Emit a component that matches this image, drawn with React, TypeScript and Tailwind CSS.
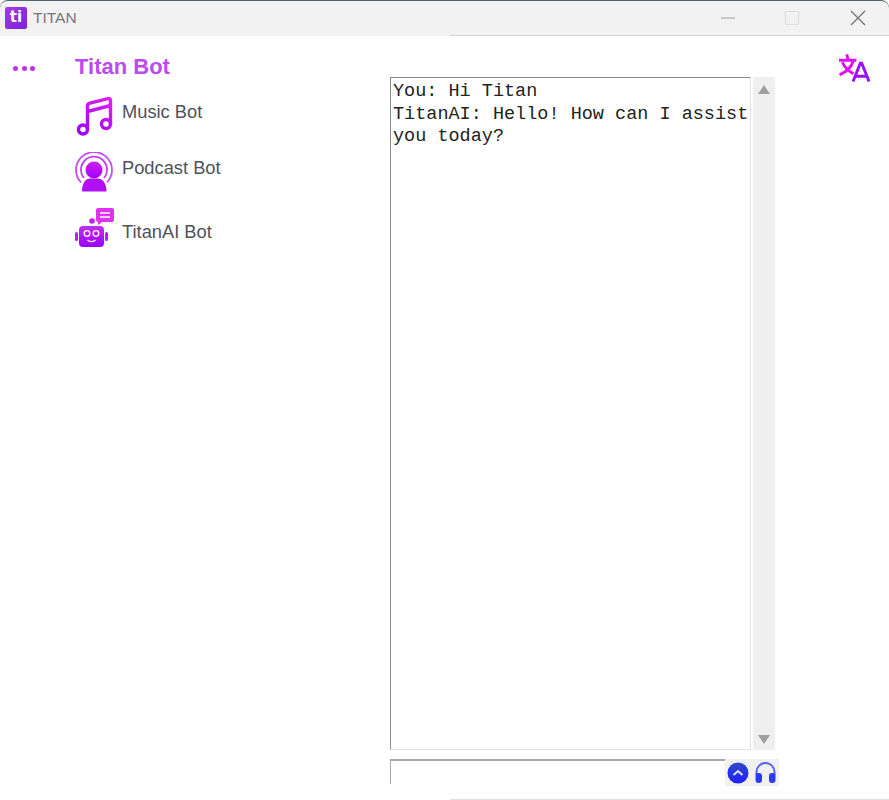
import React from "react";

const MusicIcon = () => (
  <svg width="38" height="42" viewBox="-1.500 0 38 42" fill="none" stroke="url(#gm)" strokeWidth="3.400" className="shrink-0">
    <defs>
      <linearGradient id="gm" gradientUnits="userSpaceOnUse" x1="32" y1="0" x2="5" y2="40">
        <stop offset="0" stopColor="#e020f0" />
        <stop offset="1" stopColor="#9a00ff" />
      </linearGradient>
    </defs>
    <path d="M11 33V10c0-1.500 .8-2.400 2.400-2.800l18-4.600c1.800-.3 2.600 .5 2.600 2V28" />
    <path d="M11 15.500l23-6" />
    <circle cx="6.500" cy="33.500" r="4.500" />
    <circle cx="29.500" cy="28" r="4.500" />
  </svg>
);

const PodcastIcon = () => (
  <svg width="38" height="40" viewBox="-0.500 0 38 40" className="shrink-0">
    <defs>
      <linearGradient id="gp" x1="0" y1="0" x2="0" y2="1">
        <stop offset="0" stopColor="#d020f0" />
        <stop offset="1" stopColor="#a000ff" />
      </linearGradient>
    </defs>
    <path d="M5.500 30.500A18 18 0 1 1 31.500 30.500" fill="none" stroke="#c450f2" strokeWidth="1.800" />
    <path d="M8.500 26A13 13 0 1 1 28.500 26" fill="none" stroke="#c040f0" strokeWidth="1.800" />
    <circle cx="18.500" cy="18" r="8.500" fill="url(#gp)" />
    <path d="M6.500 39.500c0-8.500 3.500-13 8.500-13h7c5 0 9 4.500 9 13z" fill="#b010f8" />
  </svg>
);

const RobotIcon = () => (
  <svg width="40" height="40" viewBox="0 0 40 40" className="shrink-0">
    <defs>
      <linearGradient id="gr" x1="0" y1="0" x2="0" y2="1">
        <stop offset="0" stopColor="#c030f0" />
        <stop offset="1" stopColor="#9a00ff" />
      </linearGradient>
    </defs>
    <path d="M23 0h14a2 2 0 0 1 2 2v10a2 2 0 0 1-2 2H27l-4 3v-3a2 2 0 0 1-2-2V2a2 2 0 0 1 2-2z" fill="#e030f0" />
    <path d="M25 5h10M25 9h10" stroke="#fff" strokeWidth="1.300" />
    <circle cx="17" cy="13" r="2.800" fill="#c020f0" />
    <rect x="4" y="18" width="25" height="21" rx="4" fill="url(#gr)" />
    <rect x="0" y="24" width="3" height="9" rx="1.500" fill="#b020f0" />
    <rect x="30" y="24" width="3" height="9" rx="1.500" fill="#b020f0" />
    <circle cx="12" cy="25.500" r="2.800" fill="none" stroke="#fff" strokeWidth="1.300" />
    <circle cx="21" cy="25.500" r="2.800" fill="none" stroke="#fff" strokeWidth="1.300" />
    <path d="M12.500 32c2.300 2 5.700 2 8 0" fill="none" stroke="#fff" strokeWidth="1.300" />
  </svg>
);

const TranslateIcon = () => (
  <svg width="31" height="30" viewBox="0 0 32 30" fill="none" strokeWidth="3" className="shrink-0">
    <path d="M0 7h18M8 1l1.500 6M15 7c-2 7-7 12-14.500 15M3.500 9c2 5 6 9 11.500 12" stroke="#e010f0" />
    <path d="M14.500 29L22 10h1.500L31 29M17 23.500h11.500" stroke="#9a10f8" />
  </svg>
);

const BotRow = ({ icon, label, className, labelClass }: { icon: React.ReactNode; label: string; className: string; labelClass: string }) => (
  <div className={`flex items-start ${className}`}>
    <div className="w-[47px] flex">{icon}</div>
    <span className={`text-[18.300px] leading-[22px] text-[#50505c] ${labelClass}`}>{label}</span>
  </div>
);

export default function App() {
  return (
    <div className="w-[889px] h-[800px] bg-white flex flex-col overflow-hidden [font-family:'Liberation_Sans',Arial,sans-serif]">
      <header className="relative h-[36px] shrink-0 flex items-center pb-[2px] bg-[#f2f2f2] border-t border-t-[#4f6470] rounded-t-[8px]">
        <div className="ml-[5px] w-[22px] h-[22px] rounded-[2px] bg-gradient-to-br from-[#a838e8] to-[#7a20d8] flex items-center justify-center text-white font-bold text-[15px] leading-none [font-family:'DejaVu_Sans',sans-serif]">
          ti
        </div>
        <span className="ml-[6px] text-[15.500px] text-[#777777]">TITAN</span>
        <div className="ml-auto flex items-center mr-[23px]">
          <svg width="14" height="2" className="mr-[50px]"><path d="M0 1h14" stroke="#999" strokeWidth="1" /></svg>
          <div className="w-[14px] h-[14px] border border-[#dcdcdc] mr-[51px]" />
          <svg width="16" height="16" viewBox="0 0 16 16"><path d="M1 1l14 14M15 1L1 15" stroke="#707070" strokeWidth="1.200" /></svg>
        </div>
        <div className="absolute left-[450px] right-0 bottom-0 h-px bg-[#d4d4d4]" />
      </header>

      <main className="relative flex flex-1 min-h-0">
        <aside className="w-[390px] shrink-0 flex">
          <div className="w-[75px] shrink-0 pt-[30px] pl-[13px] flex gap-[3.500px] items-start">
            <span className="w-[5px] h-[5px] rounded-full bg-[#c030ec]" />
            <span className="w-[5px] h-[5px] rounded-full bg-[#c030ec]" />
            <span className="w-[5px] h-[5px] rounded-full bg-[#c030ec]" />
          </div>
          <div className="flex flex-col">
            <h1 className="mt-[17px] text-[22px] leading-[28px] font-bold text-[#b84cf0]">Titan Bot</h1>
            <BotRow className="mt-[15px]" labelClass="pt-[5px]" icon={<MusicIcon />} label="Music Bot" />
            <BotRow className="mt-[14px]" labelClass="pt-[5px]" icon={<PodcastIcon />} label="Podcast Bot" />
            <BotRow className="mt-[16px]" labelClass="pt-[13px]" icon={<RobotIcon />} label="TitanAI Bot" />
          </div>
        </aside>

        <section className="w-[389px] shrink-0 flex flex-col pt-[41px]">
          <div className="flex h-[673px]">
            <div className="w-[361px] border-t border-l border-t-[#8a8a8a] border-l-[#8a8a8a] border-r border-b border-r-[#e2e2e2] border-b-[#e2e2e2] pl-[2px] pt-[3px] text-[18.500px] leading-[22.500px] text-[#222222] [font-family:'Liberation_Mono','Courier_New',monospace]">
              You: Hi Titan
              <br />
              TitanAI: Hello! How can I assist
              <br />
              you today?
            </div>
            <div className="ml-[2px] w-[22px] bg-[#efefef] flex flex-col items-center justify-between pt-[8px] pb-[6px]">
              <svg width="12" height="9"><path d="M6 0l6 9H0z" fill="#a0a0a0" /></svg>
              <svg width="12" height="9"><path d="M0 0h12L6 9z" fill="#a0a0a0" /></svg>
            </div>
          </div>
          <div className="mt-[9px] flex h-[27px]">
            <div className="w-[335px] h-[25px] border-t-2 border-l border-t-[#a8a8a8] border-l-[#a8a8a8]" />
            <div className="w-[54px] bg-[#f0f0f0] flex items-center justify-center gap-[5px]">
              <svg width="22" height="22" viewBox="0 0 22 22">
                <defs>
                  <linearGradient id="gb" x1="0" y1="0" x2="0" y2="1">
                    <stop offset="0" stopColor="#3048c8" />
                    <stop offset="1" stopColor="#2020ff" />
                  </linearGradient>
                </defs>
                <circle cx="11" cy="11" r="10.500" fill="url(#gb)" />
                <path d="M6.500 13l4.500-4 4.500 4" fill="none" stroke="#dfe4ff" strokeWidth="2" />
              </svg>
              <svg width="23" height="23" viewBox="0 0 23 23">
                <path d="M2.500 14v-3a9 9 0 0 1 18 0v3" fill="none" stroke="#5a60f0" strokeWidth="2" />
                <rect x="1.500" y="12" width="6.500" height="10" rx="3" fill="#3038f8" />
                <rect x="15" y="12" width="6.500" height="10" rx="3" fill="#3038f8" />
              </svg>
            </div>
          </div>
        </section>

        <div className="flex-1 flex justify-end pt-[17px] pr-[19px]">
          <TranslateIcon />
        </div>
        <div className="absolute left-[450px] right-0 bottom-0 h-px bg-[#e0e0e0]" />
      </main>
    </div>
  );
}
